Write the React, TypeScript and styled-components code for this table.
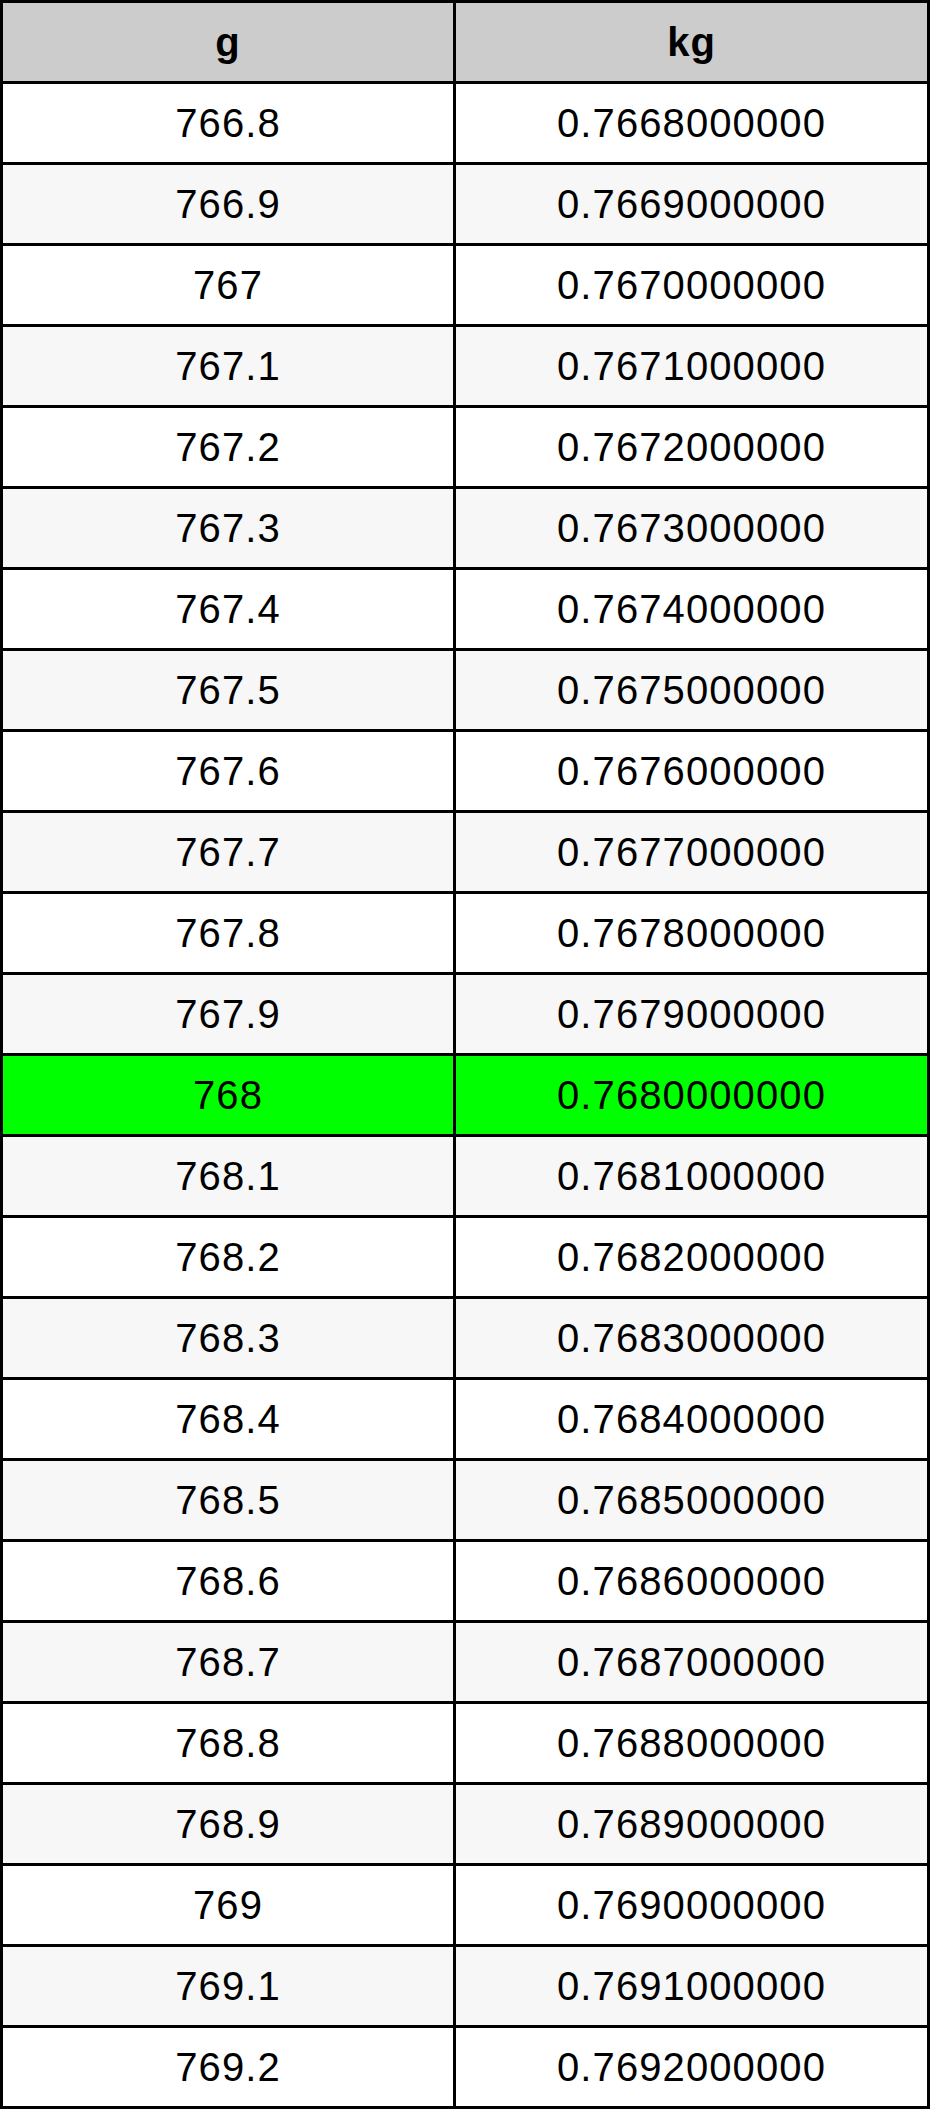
import React from "react";
import styled, { createGlobalStyle } from "styled-components";

const GlobalStyle = createGlobalStyle`
  html, body {
    margin: 0;
    padding: 0;
    background: #ffffff;
  }
  body {
    font-family: "Liberation Sans", Arial, sans-serif;
  }
`;

const Table = styled.div`
  display: grid;
  grid-template-columns: 450px 471px;
  grid-auto-rows: 78px;
  gap: 3px;
  padding: 3px;
  width: 930px;
  box-sizing: border-box;
  background: #000000;
`;

const HeaderCell = styled.div`
  display: flex;
  align-items: center;
  justify-content: center;
  background: #cccccc;
  color: #000000;
  font-size: 40px;
  font-weight: 700;
  letter-spacing: 1px;
`;

const Cell = styled.div<{ $tone: "white" | "grey" | "green" }>`
  display: flex;
  align-items: center;
  justify-content: center;
  color: #000000;
  font-size: 40px;
  letter-spacing: 1.1px;
  background: ${(p) =>
    p.$tone === "green" ? "#00ff00" : p.$tone === "grey" ? "#f7f7f7" : "#ffffff"};
`;

const rows: number[] = [];
for (let i = 7668; i <= 7692; i++) rows.push(i);

export default function App() {
  return (
    <>
      <GlobalStyle />
      <Table>
        <HeaderCell>g</HeaderCell>
        <HeaderCell>kg</HeaderCell>
        {rows.map((v, idx) => {
          const g = v % 10 === 0 ? String(v / 10) : (v / 10).toFixed(1);
          const kg = (v / 10000).toFixed(10);
          const tone = v === 7680 ? "green" : idx % 2 === 1 ? "grey" : "white";
          return (
            <React.Fragment key={v}>
              <Cell $tone={tone}>{g}</Cell>
              <Cell $tone={tone}>{kg}</Cell>
            </React.Fragment>
          );
        })}
      </Table>
    </>
  );
}
